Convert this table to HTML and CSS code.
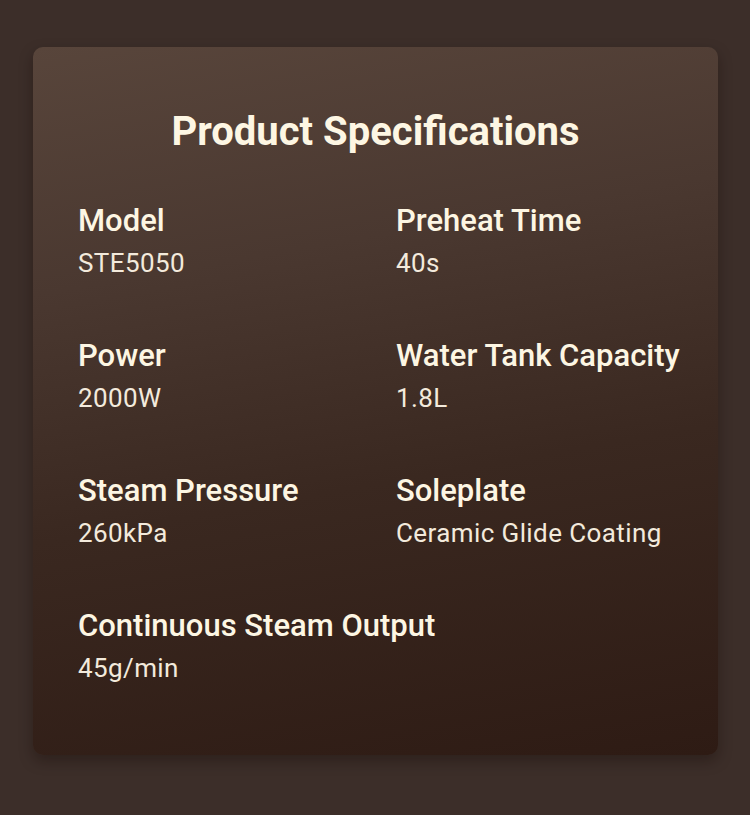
FILE: index.html
```html
<!DOCTYPE html>
<html lang="en">
<head>
    <meta charset="UTF-8">
    <meta name="viewport" content="width=device-width, initial-scale=1.0">
    <title>Product Specifications</title>
    <link rel="stylesheet" href="styles.css">
</head>
<body>
    <div class="card">
        <h1 class="title">Product Specifications</h1>
        <div class="specs">
            <div class="spec">
                <div class="label">Model</div>
                <div class="value">STE5050</div>
            </div>
            <div class="spec">
                <div class="label">Preheat Time</div>
                <div class="value">40s</div>
            </div>
            <div class="spec">
                <div class="label">Power</div>
                <div class="value">2000W</div>
            </div>
            <div class="spec">
                <div class="label">Water Tank Capacity</div>
                <div class="value">1.8L</div>
            </div>
            <div class="spec">
                <div class="label">Steam Pressure</div>
                <div class="value">260kPa</div>
            </div>
            <div class="spec">
                <div class="label">Soleplate</div>
                <div class="value">Ceramic Glide Coating</div>
            </div>
            <div class="spec wide">
                <div class="label">Continuous Steam Output</div>
                <div class="value">45g/min</div>
            </div>
        </div>
    </div>
</body>
</html>
```

FILE: styles.css
```css
body { margin: 0; background-color: #3c2e29; font-family: Roboto, "DejaVu Sans Condensed", sans-serif; padding: 47px 32px 60px 33px; }
.card { height: 708px; box-sizing: border-box; border-radius: 10px; padding: 58px 20px 0 45px; background: linear-gradient(170deg, #58453b 0%, #4a3830 30%, #3a2820 60%, #2e1b14 100%); box-shadow: 0 6px 14px rgba(20, 10, 5, 0.35); }
.title { margin: 0 0 0 -25px; text-align: center; color: #fdf6e3; font-size: 40px; font-weight: bold; line-height: 54px; }
.specs { display: grid; grid-template-columns: 318px 1fr; row-gap: 59px; margin-top: 44px; }
.spec.wide { grid-column: 1 / -1; }
.label { color: #fdf6e3; font-size: 31px; font-weight: 500; line-height: 36px; white-space: nowrap; }
.value { color: #f3eadc; font-size: 26px; line-height: 32px; margin-top: 8px; letter-spacing: 0.4px; }
```
